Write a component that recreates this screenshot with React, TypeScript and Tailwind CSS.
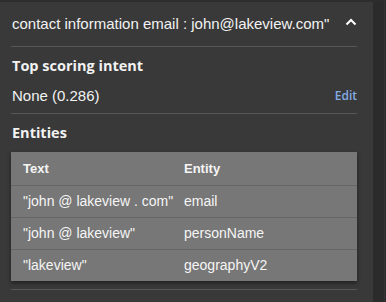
import React from "react";

type EntityRow = { text: string; entity: string };

const rows: EntityRow[] = [
  { text: '"john @ lakeview . com"', entity: "email" },
  { text: '"john @ lakeview"', entity: "personName" },
  { text: '"lakeview"', entity: "geographyV2" },
];

export default function App() {
  return (
    <div
      className="flex h-[302px] w-[386px] overflow-hidden bg-[#2d2d2d] pt-[2px] text-white"
      style={{ fontFamily: '"Liberation Sans", Arial, sans-serif' }}
    >
      <section className="flex w-[373px] flex-col bg-[#393939] pl-[11px] pr-[16px]">
        <div className="flex h-[45px] items-center justify-between border-b border-[#575757] pl-px">
          <span className="text-[15px] text-[#f2f2f2]">contact information email : john@lakeview.com"</span>
          <svg width="12" height="8" viewBox="0 0 12 8" className="mb-[4px]">
            <path d="M1.5 6.5 L6 2 L10.5 6.5" fill="none" stroke="#fff" strokeWidth="2" />
          </svg>
        </div>

        <h3 className="mt-[9px] pl-px text-[14.5px] font-bold leading-[20px] text-[#f2f2f2]" style={{ fontFamily: '"Open Sans", sans-serif' }}>
          Top scoring intent
        </h3>
        <div className="mt-[9px] flex h-[22px] items-center justify-between pl-px">
          <span className="text-[15px] text-[#f2f2f2]">None (0.286)</span>
          <button type="button" className="text-[12px] font-semibold text-[#84abe3]" style={{ fontFamily: '"Open Sans", sans-serif' }}>
            Edit
          </button>
        </div>
        <div className="mt-[6px] border-b border-[#575757]" />

        <h3 className="mt-[9px] pl-px text-[14.5px] font-bold leading-[20px] text-[#f2f2f2]" style={{ fontFamily: '"Open Sans", sans-serif' }}>
          Entities
        </h3>

        <table className="mt-[9px] w-[346px] table-fixed border-collapse bg-[#777777] text-left shadow-[0_2px_4px_rgba(0,0,0,0.45)]">
          <thead>
            <tr className="h-[33px] border-b border-[#666666]">
              <th className="w-[173px] pl-[12px] text-[13px] font-bold text-[#f5f5f5]">Text</th>
              <th className="text-[13px] font-bold text-[#f5f5f5]">Entity</th>
            </tr>
          </thead>
          <tbody>
            {rows.map((row, i) => (
              <tr key={row.text} className={`h-[32px] ${i < rows.length - 1 ? "border-b border-[#666666]" : ""}`}>
                <td className="whitespace-nowrap pl-[12px] text-[14px] text-[#f5f5f5]">{row.text}</td>
                <td className="whitespace-nowrap text-[14px] text-[#f5f5f5]">{row.entity}</td>
              </tr>
            ))}
          </tbody>
        </table>

        <div className="mt-[8px] border-b border-[#575757]" />
      </section>
      <div className="flex w-[13px] justify-end bg-[#2b2b2b]">
        <div className="mr-[1px] w-px bg-[#333333]" />
      </div>
    </div>
  );
}
